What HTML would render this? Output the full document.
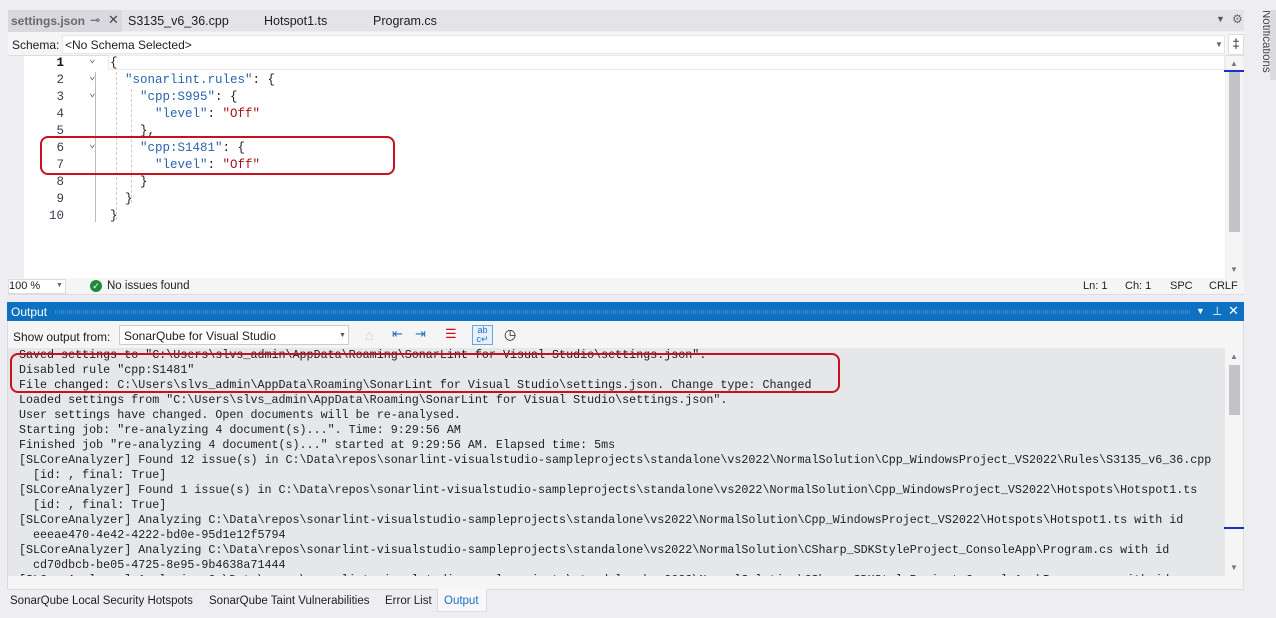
<!DOCTYPE html>
<html><head><meta charset="utf-8"><style>
*{margin:0;padding:0;box-sizing:border-box}
body{width:1276px;height:618px;background:#eeeef2;position:relative;overflow:hidden;font-family:"Liberation Sans",sans-serif;font-size:12px;color:#1e1e1e}
.a{position:absolute;white-space:pre}
.mono{font-family:"Liberation Mono",monospace}
.code{font-size:12.5px;line-height:17px}
.k{color:#2a64b0}.s{color:#a31515}
.out{font-size:11.7px;line-height:15px;color:#1e1e1e}
</style></head><body>
<!-- tab bar -->
<div class="a" style="left:8px;top:10px;width:1236px;height:21px;background:#e3e3e8"></div>
<div class="a" style="left:8px;top:10px;width:114px;height:22px;background:#d8d8de"></div>
<div class="a" style="left:11px;top:14px;color:#6a6a6a;font-weight:bold">settings.json</div>
<div class="a" style="left:90px;top:13px;color:#555">⊸</div>
<div class="a" style="left:108px;top:12px;color:#444;font-size:13px">✕</div>
<div class="a" style="left:128px;top:14px;font-size:12.5px">S3135_v6_36.cpp</div>
<div class="a" style="left:264px;top:14px;font-size:12.5px">Hotspot1.ts</div>
<div class="a" style="left:373px;top:14px;font-size:12.5px">Program.cs</div>
<div class="a" style="left:1216px;top:14px;color:#555;font-size:9px">▼</div>
<div class="a" style="left:1232px;top:12px;color:#666">⚙</div>
<!-- schema -->
<div class="a" style="left:8px;top:32px;width:1236px;height:24px;background:#f5f5f5;border-bottom:1px solid #ddd"></div>
<div class="a" style="left:12px;top:38px">Schema:</div>
<div class="a" style="left:62px;top:35px;width:1163px;height:19px;background:#fff;border:1px solid #e6e6e6"></div>
<div class="a" style="left:65px;top:38px">&lt;No Schema Selected&gt;</div>
<div class="a" style="left:1215px;top:40px;font-size:8px;color:#666">▼</div>
<div class="a" style="left:1228px;top:34px;width:16px;height:21px;background:#fff;border:1px solid #ddd;text-align:center;font-size:13px;line-height:18px">‡</div>
<!-- editor -->
<div class="a" style="left:8px;top:56px;width:1217px;height:222px;background:#fff"></div>
<div class="a" style="left:8px;top:56px;width:16px;height:222px;background:#eeeef2"></div>
<div class="a" style="left:108px;top:55px;width:1117px;height:15px;border:1px solid #eaeaea"></div>
<div class="a" style="left:1226px;top:56px;width:17px;height:222px;background:#f5f5f5"></div>
<div class="a" style="left:1229px;top:72px;width:11px;height:160px;background:#c2c3c9"></div>
<div class="a" style="left:1224px;top:70px;width:20px;height:2px;background:#1a2ec8"></div>
<div class="a" style="left:1230px;top:59px;font-size:8px;color:#777">▲</div>
<div class="a" style="left:1230px;top:265px;font-size:8px;color:#777">▼</div>
<div class="a mono code" style="left:44px;top:55px;text-align:right;width:20px;color:#3c3c50"><b style="color:#111">1</b>
2
3
4
5
6
7
8
9
10</div>
<div class="a mono" style="left:89px;top:52px;line-height:17px;font-size:11px;color:#666">⌄
⌄
⌄


⌄</div>
<div class="a" style="left:95px;top:72px;height:150px;border-left:1px solid #bbb"></div>
<div class="a" style="left:116px;top:72px;height:148px;border-left:1px dashed #ccc"></div>
<div class="a" style="left:131px;top:89px;height:114px;border-left:1px dashed #ccc"></div>
<div class="a mono code" style="left:110px;top:55px">{
  <span class="k">"sonarlint.rules"</span>: {
    <span class="k">"cpp:S995"</span>: {
      <span class="k">"level"</span>: <span class="s">"Off"</span>
    },
    <span class="k">"cpp:S1481"</span>: {
      <span class="k">"level"</span>: <span class="s">"Off"</span>
    }
  }
}</div>
<div class="a" style="left:40px;top:136px;width:355px;height:39px;border:2px solid #c8101e;border-radius:8px"></div>
<!-- status -->
<div class="a" style="left:8px;top:278px;width:1236px;height:17px;background:#f5f5f5;border-bottom:1px solid #ddd"></div>
<div class="a" style="left:8px;top:279px;width:58px;height:15px;background:#fff;border:1px solid #ddd"></div>
<div class="a" style="left:9px;top:280px;font-size:11px">100 %</div>
<div class="a" style="left:56px;top:282px;font-size:7px;color:#666">▼</div>
<div class="a" style="left:90px;top:280px;width:12px;height:12px;border-radius:50%;background:#1e8a3e;color:#fff;font-size:9px;text-align:center;line-height:12px">✓</div>
<div class="a" style="left:107px;top:280px;font-size:11.5px">No issues found</div>
<div class="a" style="left:1083px;top:280px;font-size:11px">Ln: 1</div>
<div class="a" style="left:1125px;top:280px;font-size:11px">Ch: 1</div>
<div class="a" style="left:1170px;top:280px;font-size:11px">SPC</div>
<div class="a" style="left:1209px;top:280px;font-size:11px">CRLF</div>
<!-- notifications -->
<div class="a" style="left:1250px;top:10px;width:22px;height:70px;writing-mode:vertical-rl;color:#444;font-size:11.5px">Notifications</div>
<div class="a" style="left:1270px;top:10px;width:6px;height:70px;background:#dadadf"></div>
<!-- output -->
<div class="a" style="left:7px;top:302px;width:1237px;height:288px;background:#f5f5f5;border:1px solid #ddd"></div>
<div class="a" style="left:7px;top:302px;width:1237px;height:19px;background:#0e70c0"></div>
<div class="a" style="left:11px;top:305px;color:#fff;font-size:12px">Output</div>
<div class="a" style="left:55px;top:310px;width:1135px;height:4px;background:repeating-linear-gradient(90deg,#3b8ad0 0 1px,transparent 1px 2px)"></div>
<div class="a" style="left:1196px;top:306px;color:#fff;font-size:9px">▼</div>
<div class="a" style="left:1212px;top:304px;color:#fff;font-size:12px">⊥</div>
<div class="a" style="left:1228px;top:303px;color:#fff;font-size:13px">✕</div>
<div class="a" style="left:13px;top:330px">Show output from:</div>
<div class="a" style="left:119px;top:325px;width:230px;height:20px;background:#fff;border:1px solid #ccc"></div>
<div class="a" style="left:124px;top:329px">SonarQube for Visual Studio</div>
<div class="a" style="left:339px;top:332px;font-size:7px;color:#555">▼</div>
<div class="a" style="left:365px;top:327px;color:#ccc;font-size:14px">⌂</div>
<div class="a" style="left:392px;top:326px;color:#1e6fc0;font-size:13px">⇤</div>
<div class="a" style="left:415px;top:326px;color:#1e6fc0;font-size:13px">⇥</div>
<div class="a" style="left:445px;top:326px;color:#c8101e;font-size:13px">☰</div>
<div class="a" style="left:472px;top:325px;width:21px;height:20px;border:1px solid #6aa7e0;background:#e5f0fb;font-size:9px;text-align:center;line-height:9px;color:#1e6fc0">ab<br>c↵</div>
<div class="a" style="left:504px;top:326px;font-size:14px">◷</div>
<div class="a" style="left:8px;top:348px;width:1217px;height:228px;background:#e6e7e9;overflow:hidden"></div>
<div class="a" style="left:1226px;top:348px;width:17px;height:228px;background:#f5f5f5"></div>
<div class="a" style="left:1229px;top:365px;width:11px;height:50px;background:#c2c3c9"></div>
<div class="a" style="left:1224px;top:527px;width:20px;height:2px;background:#1a2ec8"></div>
<div class="a" style="left:1230px;top:352px;font-size:8px;color:#777">▲</div>
<div class="a" style="left:1230px;top:563px;font-size:8px;color:#777">▼</div>
<div class="a" style="left:8px;top:348px;width:1217px;height:228px;overflow:hidden">
<div class="a mono out" style="left:11px;top:0px">Saved settings to "C:\Users\slvs_admin\AppData\Roaming\SonarLint for Visual Studio\settings.json".
Disabled rule "cpp:S1481"
File changed: C:\Users\slvs_admin\AppData\Roaming\SonarLint for Visual Studio\settings.json. Change type: Changed
Loaded settings from "C:\Users\slvs_admin\AppData\Roaming\SonarLint for Visual Studio\settings.json".
User settings have changed. Open documents will be re-analysed.
Starting job: "re-analyzing 4 document(s)...". Time: 9:29:56 AM
Finished job "re-analyzing 4 document(s)..." started at 9:29:56 AM. Elapsed time: 5ms
[SLCoreAnalyzer] Found 12 issue(s) in C:\Data\repos\sonarlint-visualstudio-sampleprojects\standalone\vs2022\NormalSolution\Cpp_WindowsProject_VS2022\Rules\S3135_v6_36.cpp
  [id: , final: True]
[SLCoreAnalyzer] Found 1 issue(s) in C:\Data\repos\sonarlint-visualstudio-sampleprojects\standalone\vs2022\NormalSolution\Cpp_WindowsProject_VS2022\Hotspots\Hotspot1.ts
  [id: , final: True]
[SLCoreAnalyzer] Analyzing C:\Data\repos\sonarlint-visualstudio-sampleprojects\standalone\vs2022\NormalSolution\Cpp_WindowsProject_VS2022\Hotspots\Hotspot1.ts with id
  eeeae470-4e42-4222-bd0e-95d1e12f5794
[SLCoreAnalyzer] Analyzing C:\Data\repos\sonarlint-visualstudio-sampleprojects\standalone\vs2022\NormalSolution\CSharp_SDKStyleProject_ConsoleApp\Program.cs with id
  cd70dbcb-be05-4725-8e95-9b4638a71444
[SLCoreAnalyzer] Analyzing C:\Data\repos\sonarlint-visualstudio-sampleprojects\standalone\vs2022\NormalSolution\CSharp_SDKStyleProject_ConsoleApp\Program.cs with id</div>
</div>
<div class="a" style="left:10px;top:353px;width:830px;height:40px;border:2px solid #c8101e;border-radius:8px"></div>
<!-- bottom tabs -->
<div class="a" style="left:0;top:590px;width:1276px;height:28px;background:#eeeef2"></div>
<div class="a" style="left:437px;top:589px;width:50px;height:23px;background:#f8f8fa;border:1px solid #ddd;border-top:none"></div>
<div class="a" style="left:10px;top:595px;font-size:11.5px">SonarQube Local Security Hotspots</div>
<div class="a" style="left:209px;top:595px;font-size:11.5px">SonarQube Taint Vulnerabilities</div>
<div class="a" style="left:385px;top:595px;font-size:11.5px">Error List</div>
<div class="a" style="left:444px;top:595px;font-size:11.5px;color:#1e6fc0">Output</div>
</body></html>
